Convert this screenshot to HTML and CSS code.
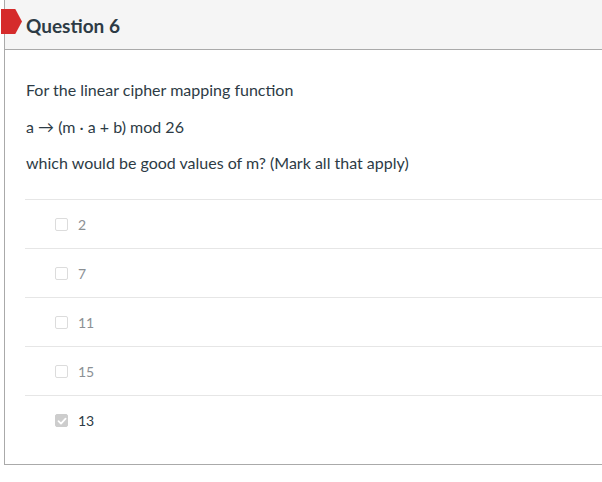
FILE: index.html
```html
<!DOCTYPE html>
<html>
<head>
<meta charset="utf-8">
<link rel="stylesheet" href="styles.css">
</head>
<body>
<div class="question">
  <div class="flag"></div>
  <div class="header">
    <h2 class="title">Question 6</h2>
  </div>
  <div class="body">
    <div class="text">
      <p>For the linear cipher mapping function</p>
      <p>a &rarr; (m &middot; a + b) mod 26</p>
      <p>which would be good values of m? (Mark all that apply)</p>
    </div>
    <div class="answers">
      <div class="answer"><span class="box"></span><span class="label">2</span></div>
      <div class="answer"><span class="box"></span><span class="label">7</span></div>
      <div class="answer"><span class="box"></span><span class="label">11</span></div>
      <div class="answer"><span class="box"></span><span class="label">15</span></div>
      <div class="answer selected"><span class="box checked"><svg width="10" height="10" viewBox="0 0 10 10"><path d="M1.5 5.2 L4 7.6 L8.6 2.6" fill="none" stroke="#fff" stroke-width="1.8" stroke-linecap="round" stroke-linejoin="round"/></svg></span><span class="label">13</span></div>
    </div>
  </div>
</div>
</body>
</html>
```
FILE: styles.css
```css
html, body {
  margin: 0;
  padding: 0;
  background: #fff;
}
body {
  font-family: Lato, "Liberation Sans", sans-serif;
  color: #2d3b45;
  width: 602px;
  height: 482px;
  overflow: hidden;
}
.question {
  position: relative;
  margin-left: 4px;
  width: 620px;
  border-left: 1px solid #aaaaaa;
  border-bottom: 1px solid #aaaaaa;
}
.flag {
  position: absolute;
  left: -4px;
  top: 9px;
  width: 21px;
  height: 25px;
  background: #d52b2b;
  clip-path: polygon(0 0, 68% 0, 100% 50%, 68% 100%, 0 100%);
}
.header {
  height: 49px;
  background: #f5f5f5;
  border-bottom: 1px solid #aaaaaa;
  display: flex;
  align-items: center;
  padding-left: 21px;
}
.title {
  margin: 0;
  font-size: 19px;
  font-weight: 700;
  color: #2d3b45;
  padding-top: 1px;
}
.body {
  padding: 30px 0 20px 20px;
}
.text {
  padding-left: 1px;
  margin-bottom: 26px;
}
.text p {
  margin: 0 0 16.5px 0;
  font-size: 16px;
  line-height: 20px;
}
.answer {
  border-top: 1px solid #e6e6e6;
  height: 48px;
  display: flex;
  align-items: center;
  padding-left: 30px;
  gap: 10px;
}
.box {
  width: 11px;
  height: 11px;
  border: 1px solid #dcdcdc;
  border-radius: 2px;
  background: #fff;
  display: flex;
  align-items: center;
  justify-content: center;
  margin-top: 1px;
}
.box.checked {
  background: #cdcdcd;
  border-color: #cdcdcd;
}
.label {
  font-size: 14px;
  color: #8b9094;
}
.selected .label {
  color: #2d3b45;
}
```
